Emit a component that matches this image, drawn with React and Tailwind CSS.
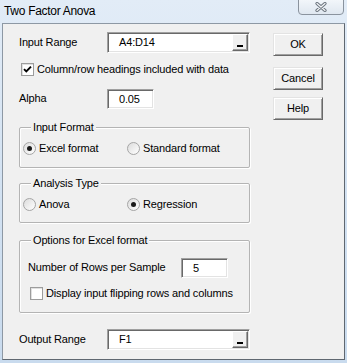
import React from 'react';

const TextBox = ({ value, width, height = 'h-[21px]', dropdown = false }) => (
  <div
    className={`${width} ${height} flex items-center bg-white border border-t-[#a0a0a0] border-l-[#a0a0a0] border-r-white border-b-white shadow-[inset_1px_1px_0_#696969,inset_-1px_-1px_0_#e3e3e3]`}
  >
    <span className="pl-[11px] leading-[13px]">{value}</span>
    {dropdown && (
      <div className="ml-auto mr-[1px] w-[16px] h-[17px] flex items-end justify-center pb-[3px] bg-[#f0f0f0] border border-t-white border-l-white border-r-[#696969] border-b-[#696969] shadow-[inset_-1px_-1px_0_#a0a0a0]">
        <div className="w-[6px] h-[2px] bg-black" />
      </div>
    )}
  </div>
);

const CheckBox = ({ checked, label }) => (
  <div className="flex items-center h-[13px]">
    <div className="w-[13px] h-[13px] bg-white border border-[#9c9c9c] shadow-[inset_1px_1px_0_#e0e0e0] flex items-center justify-center">
      {checked && (
        <svg width="9" height="9" viewBox="0 0 9 9">
          <path d="M1 4.2 L3.3 6.5 L8 1.6" fill="none" stroke="#000" strokeWidth="1.9" />
        </svg>
      )}
    </div>
    <span className="ml-[3px] leading-[13px]">{label}</span>
  </div>
);

const Radio = ({ checked, label, className = '' }) => (
  <div className={`flex items-center h-[13px] ${className}`}>
    <div className="w-[13px] h-[13px] rounded-full border border-[#a5a5a5] bg-gradient-to-br from-[#dcdcdc] to-white flex items-center justify-center">
      {checked && <div className="w-[5px] h-[5px] rounded-full bg-[#1a1a1a]" />}
    </div>
    <span className="ml-[3px] leading-[13px]">{label}</span>
  </div>
);

const Group = ({ title, height, children }) => (
  <div className={`${height} border border-[#b4b4b4] rounded-[2px] shadow-[inset_1px_1px_0_#fff,1px_1px_0_#fff]`}>
    <span className="block w-fit -mt-[7px] ml-[11px] px-[2px] bg-[#f0f0f0] leading-[13px]">{title}</span>
    {children}
  </div>
);

const Button = ({ label, className = '' }) => (
  <div
    className={`w-[50px] h-[23px] flex items-center justify-center bg-[#f0f0f0] border border-t-[#e3e3e3] border-l-[#e3e3e3] border-r-[#696969] border-b-[#696969] shadow-[inset_1px_1px_0_#fff,inset_-1px_-1px_0_#a0a0a0] ${className}`}
  >
    {label}
  </div>
);

export default function App() {
  return (
    <div className="w-[347px] h-[363px] overflow-hidden bg-gradient-to-b from-[#e2ecf7] via-[#d3e2f2] to-[#c9dbee] font-['Liberation_Sans',Arial,sans-serif] text-[11px] tracking-[-0.15px] text-black">
      {/* Title bar */}
      <div className="h-[23px] flex items-start">
        <span className="pl-[4px] pt-[4px] text-[12px] leading-[14px] tracking-[-0.3px]">Two Factor Anova</span>
        <div className="ml-auto mr-[3px] -mt-[1px] w-[46px] h-[16px] rounded-b-[4px] border border-[#8a939e] bg-gradient-to-b from-[#f2f6fa] to-[#dfe7f0] flex items-center justify-center">
          <svg width="12" height="10" viewBox="0 0 12 10">
            <path d="M2 1.5 L10 8.5 M10 1.5 L2 8.5" stroke="#6b747e" strokeWidth="3.2" strokeLinecap="round" />
            <path d="M2 1.5 L10 8.5 M10 1.5 L2 8.5" stroke="#f4f6f8" strokeWidth="1.2" strokeLinecap="round" />
          </svg>
        </div>
      </div>

      {/* Client area */}
      <div className="ml-[2px] w-[343px] h-[337px] bg-[#f0f0f0] border border-t-[#8d98a4] border-l-[#8d98a4] border-r-[#5f6770] border-b-[#5f6770] flex pl-[16px] pt-[8px]">
        <div className="w-[231px] flex flex-col">
          <div className="h-[21px] flex items-center">
            <span className="w-[88px] leading-[13px]">Input Range</span>
            <TextBox value="A4:D14" width="w-[143px]" dropdown />
          </div>

          <div className="mt-[10px] pl-[2px]">
            <CheckBox checked label="Column/row headings included with data" />
          </div>

          <div className="mt-[13px] h-[20px] flex items-center">
            <span className="w-[88px] leading-[13px] -mt-[2px]">Alpha</span>
            <TextBox value="0.05" width="w-[47px]" height="h-[20px]" />
          </div>

          <div className="mt-[18px]">
            <Group title="Input Format" height="h-[41px]">
              <div className="mt-[8px] pl-[3px] flex">
                <Radio checked label="Excel format" className="w-[104px]" />
                <Radio label="Standard format" />
              </div>
            </Group>
          </div>

          <div className="mt-[15px]">
            <Group title="Analysis Type" height="h-[40px]">
              <div className="mt-[8px] pl-[3px] flex">
                <Radio label="Anova" className="w-[104px]" />
                <Radio checked label="Regression" />
              </div>
            </Group>
          </div>

          <div className="mt-[17px]">
            <Group title="Options for Excel format" height="h-[73px]">
              <div className="mt-[11px] pl-[8px] h-[20px] flex items-center">
                <span className="w-[153px] leading-[13px] -mt-[2px]">Number of Rows per Sample</span>
                <TextBox value="5" width="w-[47px]" height="h-[20px]" />
              </div>
              <div className="mt-[9px] pl-[10px]">
                <CheckBox label="Display input flipping rows and columns" />
              </div>
            </Group>
          </div>

          <div className="mt-[16px] h-[21px] flex items-center">
            <span className="w-[88px] leading-[13px]">Output Range</span>
            <TextBox value="F1" width="w-[143px]" dropdown />
          </div>
        </div>

        <div className="ml-[23px] flex flex-col">
          <Button label="OK" className="mt-[1px]" />
          <Button label="Cancel" className="mt-[11px]" />
          <Button label="Help" className="mt-[7px]" />
        </div>
      </div>
    </div>
  );
}
